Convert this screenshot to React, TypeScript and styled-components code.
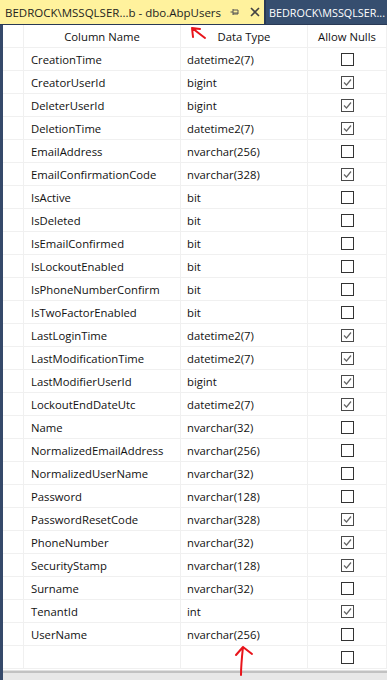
import React from 'react';
import styled, { createGlobalStyle } from 'styled-components';

const GlobalStyle = createGlobalStyle`
  html, body {
    margin: 0;
    padding: 0;
    background: #293955;
  }
  body {
    font-family: 'Open Sans', 'Noto Sans', sans-serif;
  }
`;

const columns = [
  ['CreationTime', 'datetime2(7)', false],
  ['CreatorUserId', 'bigint', true],
  ['DeleterUserId', 'bigint', true],
  ['DeletionTime', 'datetime2(7)', true],
  ['EmailAddress', 'nvarchar(256)', false],
  ['EmailConfirmationCode', 'nvarchar(328)', true],
  ['IsActive', 'bit', false],
  ['IsDeleted', 'bit', false],
  ['IsEmailConfirmed', 'bit', false],
  ['IsLockoutEnabled', 'bit', false],
  ['IsPhoneNumberConfirm', 'bit', false],
  ['IsTwoFactorEnabled', 'bit', false],
  ['LastLoginTime', 'datetime2(7)', true],
  ['LastModificationTime', 'datetime2(7)', true],
  ['LastModifierUserId', 'bigint', true],
  ['LockoutEndDateUtc', 'datetime2(7)', true],
  ['Name', 'nvarchar(32)', false],
  ['NormalizedEmailAddress', 'nvarchar(256)', false],
  ['NormalizedUserName', 'nvarchar(32)', false],
  ['Password', 'nvarchar(128)', false],
  ['PasswordResetCode', 'nvarchar(328)', true],
  ['PhoneNumber', 'nvarchar(32)', true],
  ['SecurityStamp', 'nvarchar(128)', true],
  ['Surname', 'nvarchar(32)', false],
  ['TenantId', 'int', true],
  ['UserName', 'nvarchar(256)', false],
  ['', '', false],
] as const;

const Page = styled.div`
  position: relative;
  width: 387px;
  height: 680px;
  display: flex;
  flex-direction: column;
  overflow: hidden;
  background: #293955;
  font-size: 11.3px;
  color: #111111;
`;

const TabBar = styled.div`
  display: flex;
  height: 25px;
  gap: 2px;
  flex-shrink: 0;
`;

const Tab = styled.div<{ active?: boolean }>`
  display: flex;
  align-items: center;
  padding: 0 ${p => (p.active ? '4px 0 5px' : '0 0 3px')};
  height: 24px;
  background: ${p => (p.active ? '#fff29d' : '#364e6f')};
  color: ${p => (p.active ? '#1e1e1e' : '#ffffff')};
  font-size: ${p => (p.active ? 11.5 : 10.8)}px;
  white-space: nowrap;
  overflow: hidden;
  flex: ${p => (p.active ? '0 0 auto' : '1 1 auto')};
  min-width: 0;
`;

const TabIcons = styled.span`
  display: flex;
  align-items: center;
  gap: 10px;
  margin-left: 9px;
`;

const Body = styled.div`
  flex: 1;
  display: flex;
  min-height: 0;
`;

const Strip = styled.div`
  width: 3px;
  background: #35496a;
  flex-shrink: 0;
`;

const Designer = styled.div`
  flex: 1;
  display: flex;
  flex-direction: column;
  background: #ffffff;
`;

const Row = styled.div`
  display: grid;
  grid-template-columns: 21px 157px 127px 1fr;
  height: 23px;
`;

const Cell = styled.div<{ pad?: number; center?: boolean }>`
  display: flex;
  align-items: center;
  justify-content: ${p => (p.center ? 'center' : 'flex-start')};
  padding-left: ${p => p.pad ?? 0}px;
  border-right: 1px solid #f0f0f0;
  border-bottom: 1px solid #f0f0f0;
  white-space: nowrap;
  overflow: hidden;
`;

const Box = styled.span<{ checked?: boolean }>`
  width: 11px;
  height: 11px;
  border: 1px solid ${p => (p.checked ? '#4a4a4a' : '#333333')};
  display: inline-flex;
  align-items: center;
  justify-content: center;
  background: #ffffff;
`;

const Filler = styled.div`
  flex: 1;
  border-bottom: 1px solid #e0e0e0;
`;

const ScrollBar = styled.div`
  height: 7px;
  border-top: 2px solid #c2c2c2;
  background: #e8e8e8;
  flex-shrink: 0;
`;

const Annotation = styled.svg`
  position: absolute;
  pointer-events: none;
`;

const CheckBox = ({ checked }: { checked: boolean }) => (
  <Box checked={checked}>
    {checked && (
      <svg width="9" height="9" viewBox="0 0 9 9">
        <path d="M1 4.5 L3.5 7 L8 1.5" fill="none" stroke="#666" strokeWidth="1.2" />
      </svg>
    )}
  </Box>
);

const App = () => (
  <Page>
    <GlobalStyle />
    <TabBar>
      <Tab active>
        BEDROCK\MSSQLSER...b - dbo.AbpUsers
        <TabIcons>
          <svg width="10" height="10" viewBox="0 0 10 10">
            <path d="M0.5 5 H3 M3 2 V8 M3 3 H8 V7 H3 M3 6 H8" fill="none" stroke="#555" strokeWidth="1" />
          </svg>
          <svg width="10" height="10" viewBox="0 0 10 10">
            <path d="M1 1 L9 9 M9 1 L1 9" stroke="#444" strokeWidth="1.6" />
          </svg>
        </TabIcons>
      </Tab>
      <Tab>BEDROCK\MSSQLSER...</Tab>
    </TabBar>
    <Body>
      <Strip />
      <Designer>
        <Row>
          <Cell />
          <Cell center>Column Name</Cell>
          <Cell center>Data Type</Cell>
          <Cell center>Allow Nulls</Cell>
        </Row>
        {columns.map(([name, type, nulls], i) => (
          <Row key={i}>
            <Cell />
            <Cell pad={7}>{name}</Cell>
            <Cell pad={6}>{type}</Cell>
            <Cell center>
              <CheckBox checked={nulls} />
            </Cell>
          </Row>
        ))}
        <Filler />
        <ScrollBar />
      </Designer>
    </Body>
    <Annotation width="20" height="16" style={{ left: 189, top: 26 }} viewBox="0 0 20 16">
      <path d="M3 2 L16 12 M3 2 L11 3 M3 2 L4 11" fill="none" stroke="#e8141b" strokeWidth="2" strokeLinecap="round" />
    </Annotation>
    <Annotation width="26" height="34" style={{ left: 231, top: 644 }} viewBox="0 0 26 34">
      <path d="M12 3 C11 12 10 22 10 31 M12 3 L5 11 M12 3 L21 10" fill="none" stroke="#e8141b" strokeWidth="2" strokeLinecap="round" />
    </Annotation>
  </Page>
);

export default App;
